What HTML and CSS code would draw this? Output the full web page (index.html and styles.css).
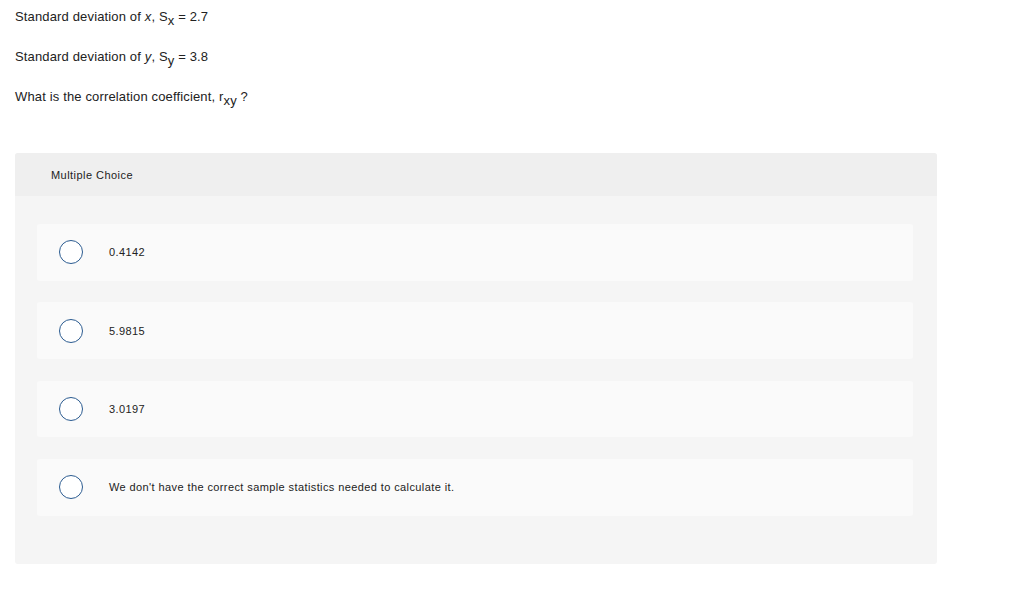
FILE: index.html
```html
<!DOCTYPE html>
<html>
<head>
<meta charset="utf-8">
<link rel="stylesheet" href="styles.css">
</head>
<body>
<div class="question">
  <p class="line">Standard deviation of <i>x</i>, S<sub>x</sub> = 2.7</p>
  <p class="line">Standard deviation of <i>y</i>, S<sub>y</sub> = 3.8</p>
  <p class="line">What is the correlation coefficient, r<sub>xy</sub> ?</p>
</div>
<div class="mc">
  <div class="mc-header">Multiple Choice</div>
  <div class="mc-body">
    <div class="option"><span class="radio"></span><span class="label">0.4142</span></div>
    <div class="option"><span class="radio"></span><span class="label">5.9815</span></div>
    <div class="option"><span class="radio"></span><span class="label">3.0197</span></div>
    <div class="option"><span class="radio"></span><span class="label">We don't have the correct sample statistics needed to calculate it.</span></div>
  </div>
</div>
</body>
</html>
```
FILE: styles.css
```css
html, body {
  margin: 0;
  padding: 0;
  background: #fff;
}
body {
  font-family: "Liberation Sans", Arial, sans-serif;
  color: #222;
  padding: 0 15px;
}
.question {
  padding-top: 8px;
}
.line {
  margin: 0 0 22px 0;
  font-size: 13px;
  line-height: 18px;
  letter-spacing: 0.15px;
}
.line i {
  font-style: italic;
}
.line sub {
  font-size: 13px;
  vertical-align: -4px;
  line-height: 0;
}
.mc {
  margin-top: 47px;
  width: 922px;
  background: #f5f5f5;
  border-radius: 3px;
  padding-bottom: 48px;
}
.mc-header {
  background: #efefef;
  height: 43px;
  line-height: 44px;
  padding-left: 36px;
  font-size: 11px;
  letter-spacing: 0.45px;
  color: #222;
  border-radius: 3px 3px 0 0;
}
.mc-body {
  padding: 28px 24px 0 22px;
  display: flex;
  flex-direction: column;
  gap: 21.8px;
}
.option {
  background: #fafafa;
  height: 56.6px;
  border-radius: 3px;
  display: flex;
  align-items: center;
  padding-left: 22px;
}
.radio {
  width: 24px;
  height: 24px;
  border: 1px solid #2b5b90;
  border-radius: 50%;
  background: #fff;
  box-sizing: border-box;
  flex: none;
}
.label {
  margin-left: 26px;
  font-size: 11px;
  letter-spacing: 0.4px;
  color: #222;
}
```
